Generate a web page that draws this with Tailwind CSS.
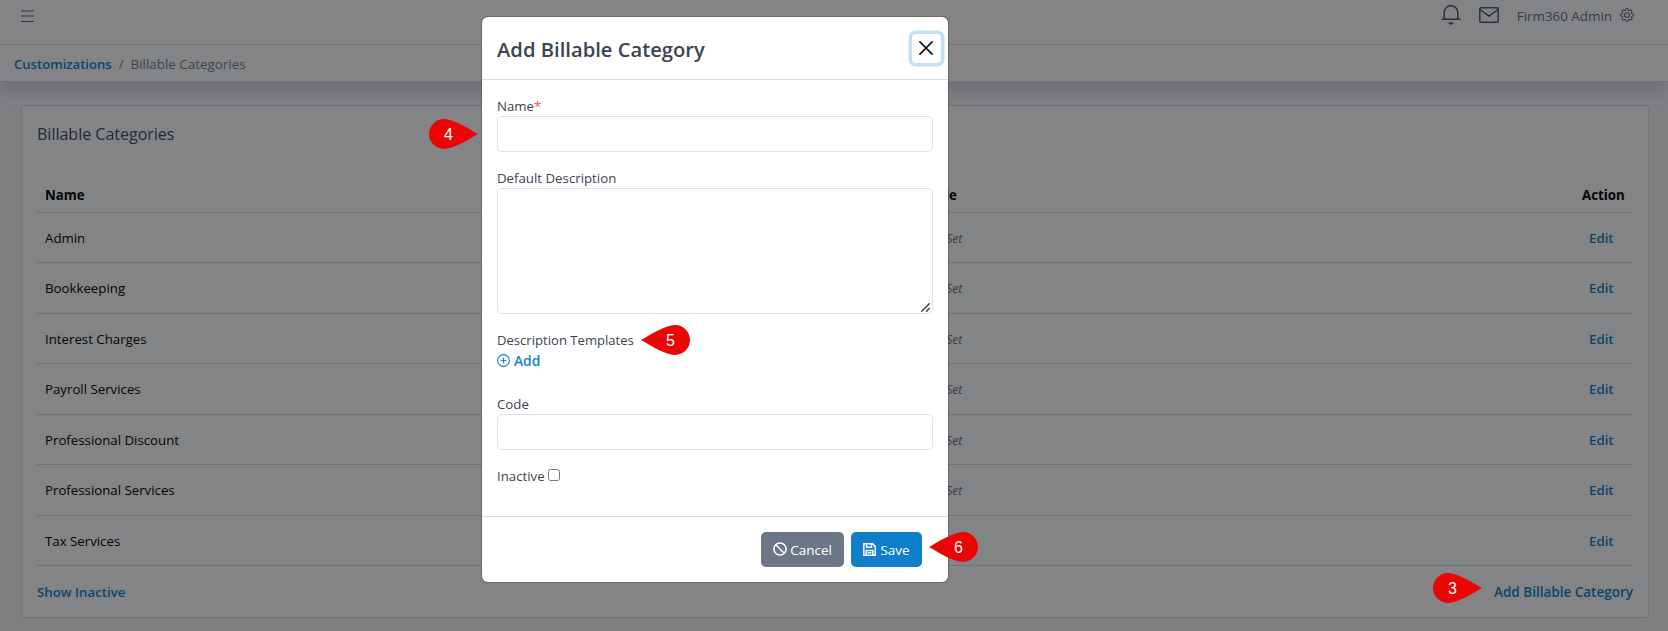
<!DOCTYPE html>
<html lang="en">
<head>
  <meta charset="UTF-8" />
  <meta name="viewport" content="width=device-width, initial-scale=1.0"/>
  <title>Billable Categories</title>
  <script src="https://cdn.jsdelivr.net/npm/@tailwindcss/browser@4"></script>
</head>
<body class="h-[631px] overflow-hidden bg-[#f3f4f7] font-['Open_Sans',sans-serif] text-[13.25px] leading-[21px] text-black">

  <!-- Header -->
  <header class="bg-white shadow-[0_8px_16px_rgba(0,0,21,0.15)]">
    <div class="flex h-[45px] items-start justify-between border-b border-[#d8dbe0] pl-[21px] pr-[34px]">
      <svg class="mt-[10px] h-[13px] w-[13px]" viewBox="0 0 13 13" stroke="#5c6370" stroke-width="1"><path d="M0 1h13M0 6h13M0 11.5h13"/></svg>
      <div class="flex items-start text-[#636f83]">
        <svg class="mt-[5px] h-5 w-5" viewBox="0 0 20 20" fill="none" stroke="#4f5663" stroke-width="1.5"><path d="M.5 14.2h19M3.2 14V7.5a6.8 6.8 0 0 1 13.6 0V14"/><path d="M8 17.6q2 2 4 0" stroke-width="2"/></svg>
        <svg class="ml-[18px] mt-[7px] h-4 w-5" viewBox="0 0 20 16" fill="none" stroke="#4f5663" stroke-width="1.5"><rect x=".8" y=".8" width="18.4" height="14.4" rx="1.2"/><path d="M1 2.5l9 6.5 9-6.5"/></svg>
        <span class="ml-[18px] mt-[6px] text-[13.4px]">Firm360 Admin</span>
        <svg class="ml-2 mt-2 h-[14px] w-[14px]" viewBox="0 0 16 16" fill="#4f5663"><path d="M8 4.754a3.246 3.246 0 1 0 0 6.492 3.246 3.246 0 0 0 0-6.492zM5.754 8a2.246 2.246 0 1 1 4.492 0 2.246 2.246 0 0 1-4.492 0z"/><path d="M9.796 1.343c-.527-1.79-3.065-1.79-3.592 0l-.094.319a.873.873 0 0 1-1.255.52l-.292-.16c-1.64-.892-3.433.902-2.54 2.541l.159.292a.873.873 0 0 1-.52 1.255l-.319.094c-1.79.527-1.79 3.065 0 3.592l.319.094a.873.873 0 0 1 .52 1.255l-.16.292c-.892 1.64.901 3.434 2.541 2.54l.292-.159a.873.873 0 0 1 1.255.52l.094.319c.527 1.79 3.065 1.79 3.592 0l.094-.319a.873.873 0 0 1 1.255-.52l.292.16c1.64.893 3.434-.902 2.54-2.541l-.159-.292a.873.873 0 0 1 .52-1.255l.319-.094c1.79-.527 1.79-3.065 0-3.592l-.319-.094a.873.873 0 0 1-.52-1.255l.16-.292c.893-1.64-.902-3.433-2.541-2.54l-.292.159a.873.873 0 0 1-1.255-.52l-.094-.319zm-2.633.283c.246-.835 1.428-.835 1.674 0l.094.319a1.873 1.873 0 0 0 2.693 1.115l.291-.16c.764-.415 1.6.42 1.184 1.185l-.159.292a1.873 1.873 0 0 0 1.116 2.692l.318.094c.835.246.835 1.428 0 1.674l-.319.094a1.873 1.873 0 0 0-1.115 2.693l.16.291c.415.764-.42 1.6-1.185 1.184l-.291-.159a1.873 1.873 0 0 0-2.693 1.116l-.094.318c-.246.835-1.428.835-1.674 0l-.094-.319a1.873 1.873 0 0 0-2.692-1.115l-.292.16c-.764.415-1.6-.42-1.184-1.185l.159-.291A1.873 1.873 0 0 0 1.945 8.93l-.319-.094c-.835-.246-.835-1.428 0-1.674l.319-.094A1.873 1.873 0 0 0 3.06 4.377l-.16-.292c-.415-.764.42-1.6 1.185-1.184l.292.159a1.873 1.873 0 0 0 2.692-1.115l.094-.319z"/></svg>
      </div>
    </div>
    <nav class="flex h-[37px] items-center border-b border-[#d8dbe0] px-[14px] pt-[2px] text-[#768192]">
      <a class="text-[13.1px] font-semibold text-[#0f7fca]">Customizations</a>
      <span class="px-[7px]">/</span>
      <span class="text-[13.4px]">Billable Categories</span>
    </nav>
  </header>

  <!-- Card -->
  <main class="ml-[21px] mr-[19px] mt-[23px] h-[513px] rounded border border-[#d8dbe0] bg-white px-[15px]">
    <h4 class="h-[70px] pt-[15px] text-[16px] leading-[26px] text-[#3c4b64]">Billable Categories</h4>
    <table class="w-full table-fixed">
      <thead>
        <tr class="h-[36px] border-b border-[#d8dbe0] text-left font-bold">
          <th class="w-[879px] px-2 pt-1">Name</th>
          <th class="px-2 pt-1">Code</th>
          <th class="w-[59px] pl-2 pt-1">Action</th>
        </tr>
      </thead>
      <tbody id="categoryList"></tbody>
    </table>
    <div class="mt-4 flex justify-between font-semibold text-[#0f7fca]">
      <a>Show Inactive</a>
      <a class="text-[13.5px]">Add Billable Category</a>
    </div>
  </main>

  <!-- Backdrop -->
  <div class="absolute inset-0 bg-[#080a0c]/50"></div>

  <!-- Modal -->
  <div class="absolute left-[482px] top-[17px] flex h-[565px] w-[466px] flex-col rounded-md bg-white text-[#3c4452] ring-1 ring-black/20">
    <div class="flex h-[63px] items-center justify-between border-b border-[#d8dbe0] pl-[15px] pr-[7px]">
      <h5 class="pt-[1px] text-[20.2px] font-semibold leading-6">Add Billable Category</h5>
      <button class="flex h-[29px] w-[29px] items-center justify-center rounded ring-[3.5px] ring-[#c3dff2]">
        <svg class="mr-[1px] h-[14px] w-[14px]" viewBox="0 0 14 14" stroke="#111" stroke-width="1.6" stroke-linecap="round"><path d="M.9.9l12.2 12.2M13.1.9L.9 13.1"/></svg>
      </button>
    </div>
    <div class="flex h-[436px] flex-col px-[15px] pt-[15px]">
      <label class="pt-[2px] leading-[19px]">Name<span class="text-[#f0504b]">*</span></label>
      <input type="text" class="h-[36px] w-full rounded-[5px] border border-[#dfe1e5]">
      <label class="mt-[15px] pt-[2px] leading-[19px]">Default Description</label>
      <div class="relative h-[126px]">
        <textarea class="block h-[126px] w-full resize-none rounded-[5px] border border-[#dfe1e5]"></textarea>
        <!-- resize grip -->
        <svg class="absolute bottom-[2px] right-[3px] h-[9px] w-[9px]" viewBox="0 0 9 9" stroke="#444" stroke-width="1.5"><path d="M.3 8.7L8.7.3M5 8.7L8.7 5"/></svg>
      </div>
      <label class="mt-[15px] pt-[2px] text-[13.1px] leading-[19px]">Description Templates</label>
      <a class="flex items-center pt-[1px] font-semibold leading-5 text-[#0f7fca]">
        <svg class="mb-[1px] mr-1 h-[13px] w-[13px]" viewBox="0 0 13 13" fill="none" stroke="currentColor" stroke-width="1.1"><circle cx="6.5" cy="6.5" r="5.9"/><path d="M6.5 3.7v5.6M3.7 6.5h5.6"/></svg>
        <span class="text-[13.8px]">Add</span>
      </a>
      <label class="mt-[22px] pt-[2px] leading-[19px]">Code</label>
      <input type="text" class="h-[36px] w-full rounded-[5px] border border-[#dfe1e5]">
      <label class="mt-[15px] flex items-center pt-[2px] leading-[19px]">Inactive <input type="checkbox" class="mb-[3px] ml-[3px] h-[12px] w-[12px]"></label>
    </div>
    <div class="flex h-[66px] items-center justify-end gap-[7px] border-t border-[#d8dbe0] pr-[26px] font-medium text-white">
      <button class="flex h-[35px] w-[83px] items-center justify-center rounded-[5px] bg-[#6b7785]">
        <svg class="mb-[1px] mr-[3px] h-[14px] w-[14px]" viewBox="0 0 14 14" fill="none" stroke="currentColor" stroke-width="1.5"><circle cx="7" cy="7" r="6.1"/><path d="M2.8 2.8l8.4 8.4"/></svg>
        <span class="pt-[1px] text-[13.5px]">Cancel</span>
      </button>
      <button class="flex h-[35px] w-[71px] items-center justify-center rounded-[5px] bg-[#0f7fca]">
        <svg class="mb-[1px] mr-1 h-[13px] w-[13px]" viewBox="0 0 13 13" fill="none" stroke="currentColor" stroke-width="1.5"><path d="M.8.8h8.8l2.6 2.6v8.8H.8zM3.2 12V7.5h6.6V12M3.5 1v3.3h5V1M4.5 9.7h4"/></svg>
        <span class="pt-[1px] text-[13.5px]">Save</span>
      </button>
    </div>
  </div>

  <!-- Step markers -->
  <div class="absolute left-[429px] top-[119px] h-[30px] w-[49px] font-['Liberation_Sans',sans-serif] text-base text-white">
    <svg class="absolute inset-0" width="49" height="30" fill="#eb0606"><path d="M49 15C40 20 25 30 15 30A15 15 0 0 1 15 0C25 0 40 10 49 15z"/></svg>
    <span class="absolute left-[15px] top-[4px]">4</span>
  </div>
  <div class="absolute left-[1433px] top-[573px] h-[30px] w-[49px] font-['Liberation_Sans',sans-serif] text-base text-white">
    <svg class="absolute inset-0" width="49" height="30" fill="#eb0606"><path d="M49 15C40 20 25 30 15 30A15 15 0 0 1 15 0C25 0 40 10 49 15z"/></svg>
    <span class="absolute left-[15px] top-[4px]">3</span>
  </div>
  <div class="absolute left-[641px] top-[325px] h-[30px] w-[49px] font-['Liberation_Sans',sans-serif] text-base text-white">
    <svg class="absolute inset-0" width="49" height="30" fill="#eb0606"><path d="M0 15C9 20 24 30 34 30A15 15 0 0 0 34 0C24 0 9 10 0 15z"/></svg>
    <span class="absolute left-[25px] top-[4px]">5</span>
  </div>
  <div class="absolute left-[929px] top-[532px] h-[30px] w-[49px] font-['Liberation_Sans',sans-serif] text-base text-white">
    <svg class="absolute inset-0" width="49" height="30" fill="#eb0606"><path d="M0 15C9 20 24 30 34 30A15 15 0 0 0 34 0C24 0 9 10 0 15z"/></svg>
    <span class="absolute left-[25px] top-[4px]">6</span>
  </div>

  <script>
    const categories = ["Admin", "Bookkeeping", "Interest Charges", "Payroll Services", "Professional Discount", "Professional Services", "Tax Services"];
    document.getElementById("categoryList").innerHTML = categories.map(name => `
      <tr class="h-[50.5px] border-b border-[#d8dbe0]">
        <td class="px-2 pt-[2px]">${name}</td>
        <td class="px-2 pt-[2px] text-[12px] italic text-[#636f83]">Not Set</td>
        <td class="pl-[15px] pt-[2px] font-semibold text-[#0f7fca]">Edit</td>
      </tr>`).join("");
  </script>
</body>
</html>
